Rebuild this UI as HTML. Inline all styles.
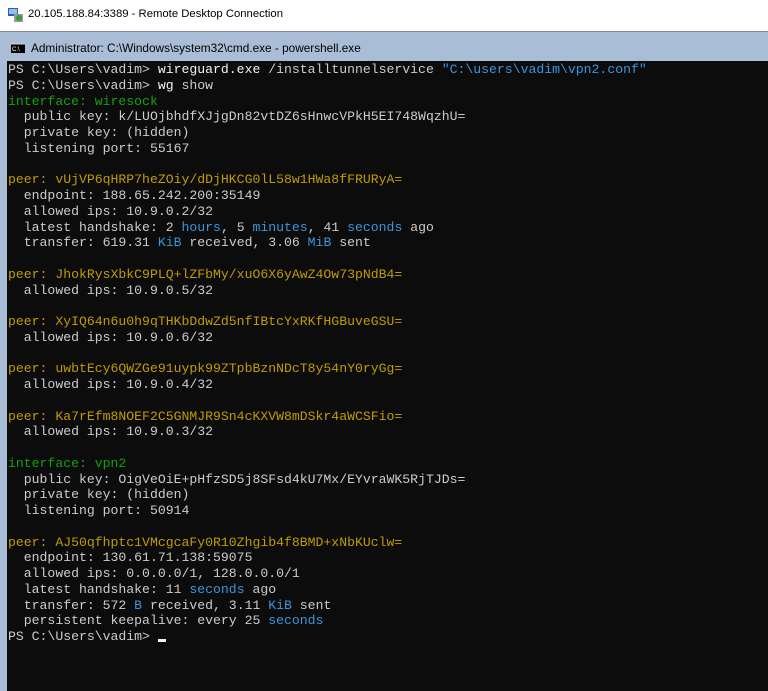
<!DOCTYPE html>
<html><head><style>
body{margin:0;width:768px;height:691px;overflow:hidden;background:#a9bdd6;position:relative;font-family:"Liberation Sans",sans-serif}
#tb{position:absolute;left:0;top:0;width:768px;height:31px;background:#fff;border-bottom:1px solid #8a8a8a}
#tb span{position:absolute;left:28px;top:8px;font-size:11.3px;color:#000}
#ib{position:absolute;left:7px;top:32px;width:761px;height:29px;background:#a9bdd6}
#ib span{position:absolute;left:24px;top:9px;font-size:11.8px;color:#000}
#con{position:absolute;left:7px;top:61px;width:761px;height:630px;background:#0c0c0c}
pre{margin:0;position:absolute;left:1px;top:1px;font-family:"Liberation Mono",monospace;font-size:13.15px;line-height:15.75px;color:#cccccc}
.g{color:#13a10e}.y{color:#c19c00}.b{color:#3a96dd}
</style></head><body>
<div id="tb">
<svg style="position:absolute;left:8px;top:7px" width="16" height="16"><rect x="0" y="1" width="10" height="8" fill="#2b5fb0"/><rect x="1" y="2" width="8" height="5" fill="#8fc0f0"/><rect x="6" y="7" width="9" height="8" fill="#999"/><circle cx="11" cy="11" r="3" fill="#3a9a3a"/></svg>
<span>20.105.188.84:3389 - Remote Desktop Connection</span></div>
<div id="ib">
<svg style="position:absolute;left:4px;top:11px" width="14" height="10"><rect width="14" height="10" fill="#000"/><rect x="0" y="0" width="14" height="1.5" fill="#ccc"/><text x="1" y="8" font-size="6" fill="#fff" font-family="Liberation Sans">C:\</text></svg>
<span>Administrator: C:\Windows\system32\cmd.exe - powershell.exe</span></div>
<div id="con"><pre>PS C:\Users\vadim&gt; <span style="color:#f2f2f2">wireguard.exe</span> /installtunnelservice <span class="b">"C:\users\vadim\vpn2.conf"</span>
PS C:\Users\vadim&gt; <span style="color:#f2f2f2">wg</span> show
<span class="g">interface: wiresock</span>
  public key: k/LUOjbhdfXJjgDn82vtDZ6sHnwcVPkH5EI748WqzhU=
  private key: (hidden)
  listening port: 55167

<span class="y">peer: vUjVP6qHRP7heZOiy/dDjHKCG0lL58w1HWa8fFRURyA=</span>
  endpoint: 188.65.242.200:35149
  allowed ips: 10.9.0.2/32
  latest handshake: 2 <span class="b">hours</span>, 5 <span class="b">minutes</span>, 41 <span class="b">seconds</span> ago
  transfer: 619.31 <span class="b">KiB</span> received, 3.06 <span class="b">MiB</span> sent

<span class="y">peer: JhokRysXbkC9PLQ+lZFbMy/xuO6X6yAwZ4Ow73pNdB4=</span>
  allowed ips: 10.9.0.5/32

<span class="y">peer: XyIQ64n6u0h9qTHKbDdwZd5nfIBtcYxRKfHGBuveGSU=</span>
  allowed ips: 10.9.0.6/32

<span class="y">peer: uwbtEcy6QWZGe91uypk99ZTpbBznNDcT8y54nY0ryGg=</span>
  allowed ips: 10.9.0.4/32

<span class="y">peer: Ka7rEfm8NOEF2C5GNMJR9Sn4cKXVW8mDSkr4aWCSFio=</span>
  allowed ips: 10.9.0.3/32

<span class="g">interface: vpn2</span>
  public key: OigVeOiE+pHfzSD5j8SFsd4kU7Mx/EYvraWK5RjTJDs=
  private key: (hidden)
  listening port: 50914

<span class="y">peer: AJ50qfhptc1VMcgcaFy0R10Zhgib4f8BMD+xNbKUclw=</span>
  endpoint: 130.61.71.138:59075
  allowed ips: 0.0.0.0/1, 128.0.0.0/1
  latest handshake: 11 <span class="b">seconds</span> ago
  transfer: 572 <span class="b">B</span> received, 3.11 <span class="b">KiB</span> sent
  persistent keepalive: every 25 <span class="b">seconds</span>
PS C:\Users\vadim&gt; <span style="display:inline-block;width:8px;height:3px;background:#f2f2f2;vertical-align:-2px"></span></pre></div>
</body></html>
